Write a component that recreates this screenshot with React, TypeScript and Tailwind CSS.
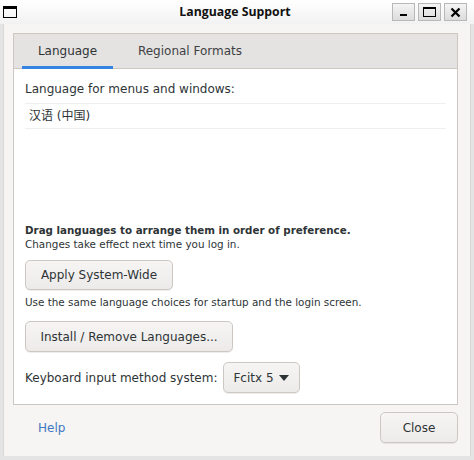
import { useState } from 'react'

const FONT = { fontFamily: '"DejaVu Sans", "Noto Sans CJK SC", sans-serif' }

function GtkButton({ children, className = '' }: { children: React.ReactNode; className?: string }) {
  return (
    <button
      className={`rounded-[5px] border border-[#cdc7c2] bg-gradient-to-b from-[#f6f5f4] to-[#edebe9] text-[12px] text-[#2e3436] shadow-[0_1px_0_rgba(0,0,0,0.07)] ${className}`}
      type="button"
    >
      {children}
    </button>
  )
}

function TitleButton({ children }: { children: React.ReactNode }) {
  return (
    <div className="flex h-[18px] w-[23px] items-center justify-center border border-[#b8b8b8] bg-gradient-to-b from-[#f4f4f4] to-[#dcdcdc]">
      {children}
    </div>
  )
}

export default function App() {
  const [tab, setTab] = useState<'lang' | 'region'>('lang')

  return (
    <div className="flex h-[460px] w-[474px] flex-col bg-[#e4e4e4]" style={FONT}>
      {/* title bar */}
      <div className="flex h-[24px] items-center bg-gradient-to-b from-white to-[#f2f2f2] pl-[3px] pr-[7px]">
        <div className="h-[12px] w-[14px] border border-black border-t-[3px]" />
        <div
          className="flex-1 pl-[61px] text-center text-[12.3px] font-bold text-[#111]"
          style={{ fontFamily: '"Open Sans", "Noto Sans", sans-serif' }}
        >
          Language Support
        </div>
        <div className="flex gap-[3px]">
          <TitleButton>
            <div className="mt-[6px] h-[2px] w-[7px] bg-black" />
          </TitleButton>
          <TitleButton>
            <div className="h-[10px] w-[13px] border border-t-2 border-black" />
          </TitleButton>
          <TitleButton>
            <svg width="11" height="11" viewBox="0 0 11 11">
              <path d="M1.5 1.5 L9.5 9.5 M9.5 1.5 L1.5 9.5" stroke="black" strokeWidth="2.2" />
            </svg>
          </TitleButton>
        </div>
      </div>

      {/* window body */}
      <div className="mx-[3px] mb-[4px] flex flex-1 flex-col border-x border-[#d8d8d8] bg-[#f6f5f4] pl-[9px] pr-[12px] pt-[9px]">
        <div className="flex h-[372px] flex-col border border-[#cdc7c2]">
          {/* tabs */}
          <div className="flex h-[35px] border-b border-[#cdc7c2] bg-[#e5e3e1] px-[8px]">
            <button
              className={`relative w-[91px] text-[12px] ${tab === 'lang' ? 'text-[#2e3436]' : 'text-[#3d4144]'}`}
              onClick={() => setTab('lang')}
              type="button"
            >
              Language
              {tab === 'lang' && <div className="absolute bottom-[-1px] left-0 right-0 h-[3px] bg-[#3584e4]" />}
            </button>
            <button
              className={`relative w-[154px] text-[12px] ${tab === 'region' ? 'text-[#2e3436]' : 'text-[#3d4144]'}`}
              onClick={() => setTab('region')}
              type="button"
            >
              Regional Formats
              {tab === 'region' && <div className="absolute bottom-[-1px] left-0 right-0 h-[3px] bg-[#3584e4]" />}
            </button>
          </div>

          {/* page */}
          <div className="flex flex-1 flex-col bg-white px-[11px] text-[#2e3436]">
            <div className="mt-[12px] text-[12px] leading-[16px]">Language for menus and windows:</div>
            <div className="mt-[6px] flex h-[26px] items-center border-y border-[#f0efee] pl-[4px] text-[12px]">
              汉语 (中国)
            </div>

            <div className="mt-[94px] text-[10.3px] font-bold leading-[14px]">
              Drag languages to arrange them in order of preference.
            </div>
            <div className="text-[10.4px] leading-[14px]">Changes take effect next time you log in.</div>

            <GtkButton className="mt-[9px] h-[30px] w-[148px]">Apply System-Wide</GtkButton>

            <div className="mt-[5px] text-[10.4px] leading-[14px]">
              Use the same language choices for startup and the login screen.
            </div>

            <GtkButton className="mt-[12px] h-[31px] w-[208px]">Install / Remove Languages...</GtkButton>

            <div className="mt-[10px] flex items-center">
              <span className="text-[12px]">Keyboard input method system:</span>
              <GtkButton className="ml-[5px] flex h-[31px] w-[77px] items-center justify-center gap-[5px]">
                <span>Fcitx 5</span>
                <svg width="10" height="6" viewBox="0 0 10 6">
                  <path d="M0 0 L10 0 L5 6 Z" fill="#2e3436" />
                </svg>
              </GtkButton>
            </div>
          </div>
        </div>

        {/* footer */}
        <div className="mt-[7px] flex items-center justify-between">
          <span className="ml-[25px] text-[12px] text-[#3f77c0]">Help</span>
          <GtkButton className="h-[31px] w-[78px]">Close</GtkButton>
        </div>
      </div>
    </div>
  )
}
